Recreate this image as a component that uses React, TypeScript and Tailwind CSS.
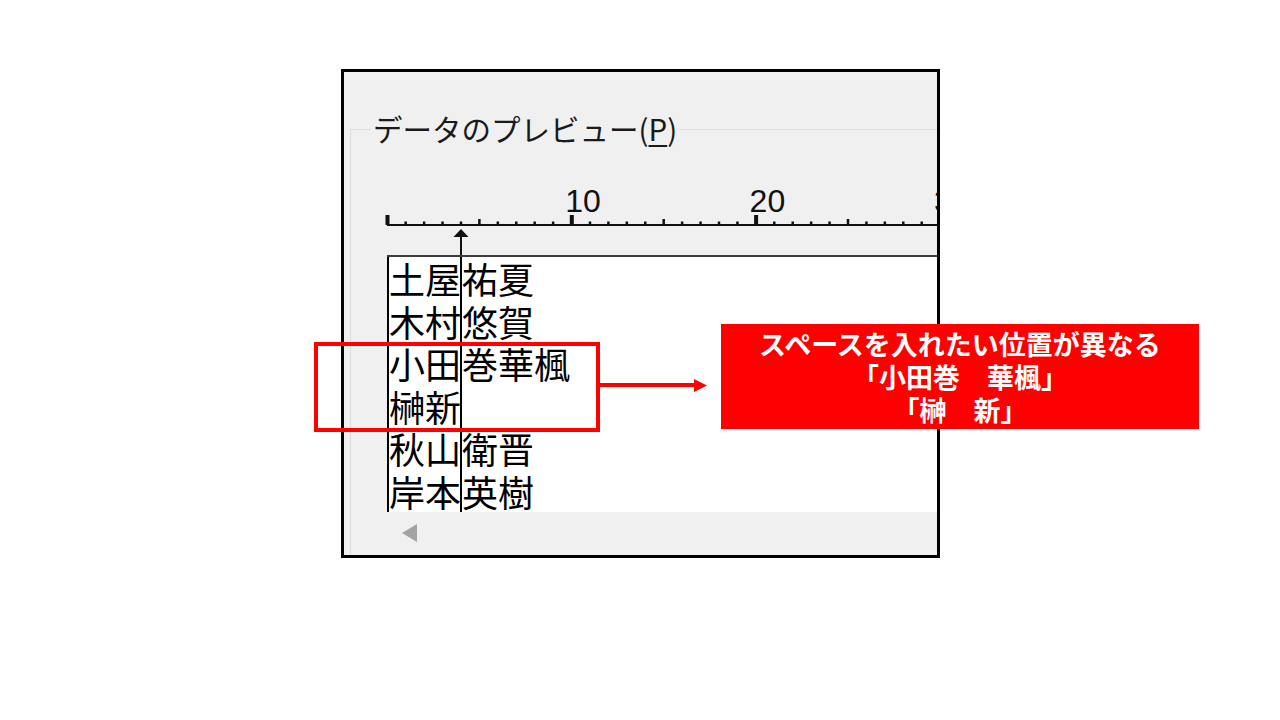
const ROWS: [string, string][] = [
  ["土屋", "祐夏"],
  ["木村", "悠賀"],
  ["小田", "巻華楓"],
  ["榊新", ""],
  ["秋山", "衛晋"],
  ["岸本", "英樹"],
];

const CJK = { fontFamily: '"Noto Sans CJK JP", "Noto Sans", sans-serif' };
const STEP = 18.43;

function Ruler() {
  const ticks = Array.from({ length: 31 }, (_, i) => i);
  return (
    <div className="relative w-[580px] h-[69px]">
      {[10, 20, 30].map((n) => (
        <span
          key={n}
          className="absolute top-[-3px] text-[32px] leading-[36px] text-[#111] whitespace-nowrap"
          style={{ left: 7 + n * STEP - 6, fontFamily: '"Liberation Sans", Arial, sans-serif' }}
        >
          {n}
        </span>
      ))}
      <svg width="580" height="69" className="block">
        <rect x="7" y="38" width="573" height="2" fill="#111" />
        {ticks.map((i) => {
          const x = 7 + i * STEP;
          if (i % 10 === 0) return <rect key={i} x={x - 1.5} y="29" width="4" height="10" fill="#111" />;
          if (i % 5 === 0) return <rect key={i} x={x - 1} y="33" width="2.5" height="6" fill="#111" />;
          return <rect key={i} x={x - 1} y="35.5" width="2.5" height="3" fill="#111" />;
        })}
        {/* column break marker */}
        <polygon points="81,43 73.5,51 88.5,51" fill="#111" />
        <rect x="80" y="50" width="2" height="19" fill="#111" />
      </svg>
    </div>
  );
}

function Preview() {
  return (
    <div className="w-[599px] h-[489px] border-[3px] border-black bg-[#f0f0f0] overflow-hidden">
      <div className="relative mt-[57px] ml-[6px] w-[700px] h-[440px] border-t border-l border-[#dcdcdc]">
        <span
          className="absolute left-[20px] top-[-22px] px-[2px] bg-[#f0f0f0] text-[29.5px] leading-[40px] text-[#1a1a1a]"
          style={CJK}
        >
          データのプレビュー(<span className="underline underline-offset-4">P</span>)
        </span>
        <div className="mt-[56px] ml-[29px]">
          <Ruler />
          <div className="ml-[7px] w-[650px]">
            <div className="flex h-[257px] bg-white border-t-2 border-[#3c3c3c] text-[36px] leading-[42px] text-black" style={CJK}>
              <div className="flex flex-col w-[75px] border-l-2 border-r-2 border-black">
                {ROWS.map(([a], i) => (
                  <div key={i} className="h-[43px] whitespace-nowrap">{a}</div>
                ))}
              </div>
              <div className="flex flex-col flex-1">
                {ROWS.map(([, b], i) => (
                  <div key={i} className="h-[43px] whitespace-nowrap">{b || "\u00a0"}</div>
                ))}
              </div>
            </div>
            <div className="h-[43px] pt-[11px] pl-[15px]">
              <svg width="16" height="20" className="block">
                <polygon points="0,10 15,1 15,19" fill="#a3a3a3" />
              </svg>
            </div>
          </div>
        </div>
      </div>
    </div>
  );
}

export default function App() {
  return (
    <div className="relative w-[1280px] h-[720px] bg-white overflow-hidden">
      <div className="pt-[69px] pl-[341px]">
        <Preview />
      </div>

      {/* highlight + callout */}
      <div className="absolute left-[314px] top-[342px] w-[286px] h-[90px] border-4 border-[#ff0000]" />
      <div className="absolute left-[600px] top-[383px] w-[96px] h-[4px] bg-[#ff0000]" />
      <svg className="absolute left-[694px] top-[379px]" width="13" height="13">
        <polygon points="0,0 13,6.5 0,13" fill="#ff0000" />
      </svg>
      <div
        className="absolute left-[721px] top-[324px] w-[478px] h-[105px] bg-[#ff0000] flex flex-col items-center justify-center text-white font-bold text-[27px] leading-[33px]"
        style={CJK}
      >
        <div>スペースを入れたい位置が異なる</div>
        <div>「小田巻　華楓」</div>
        <div>「榊　新」</div>
      </div>
    </div>
  );
}
